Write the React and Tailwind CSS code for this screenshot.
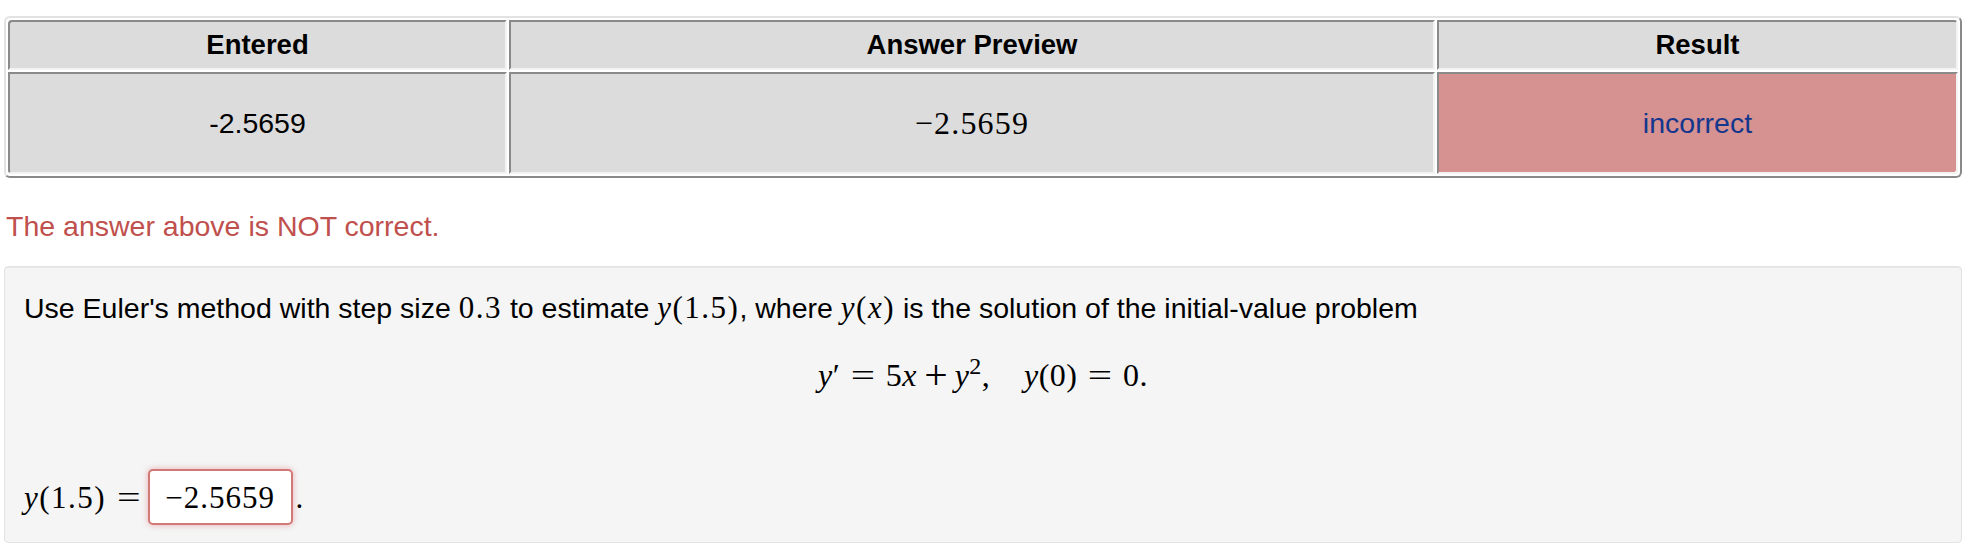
import React from "react";

const sans = "font-['Liberation_Sans',Arial,Helvetica,sans-serif]";
const serif = "font-['Liberation_Serif','Times_New_Roman',serif]";

// inset-looking table cell, the way the old results table draws them
const cell =
  "flex items-center justify-center border-2 border-t-[#8a8a8a] border-l-[#8a8a8a] border-r-[#f3f3f3] border-b-[#f3f3f3]";

// relation sign, drawn a bit wider like the TeX one
function Rel({ children }) {
  return <span className="mx-[0.42em] inline-block scale-x-[1.35]">{children}</span>;
}

function Bin({ children }) {
  return <span className="mx-[0.3em] inline-block scale-[1.3]">{children}</span>;
}

function AttemptResults() {
  return (
    <div className="grid w-[1958px] grid-cols-[499px_926px_1fr] grid-rows-[50px_102px] gap-[2px] rounded-[6px] border-2 border-t-[#e2e2e2] border-l-[#e2e2e2] border-r-[#8a8a8a] border-b-[#8a8a8a] p-[2px]">
      <div className={`${cell} rounded-tl-[4px] bg-[#dcdcdc] text-[27.5px] font-bold`}>Entered</div>
      <div className={`${cell} bg-[#dcdcdc] text-[27.5px] font-bold`}>Answer Preview</div>
      <div className={`${cell} rounded-tr-[4px] bg-[#dcdcdc] text-[27.5px] font-bold`}>Result</div>

      <div className={`${cell} rounded-bl-[4px] bg-[#dcdcdc] text-[28.5px]`}>-2.5659</div>
      <div className={`${cell} bg-[#dcdcdc]`}>
        <span className={`${serif} text-[32px] tracking-[1.2px]`}>−2.5659</span>
      </div>
      <div className={`${cell} rounded-br-[4px] bg-[#d69191] text-[28.5px] text-[#13378c]`}>incorrect</div>
    </div>
  );
}

function M({ children }) {
  return <span className={`${serif} text-[31px] tracking-[1.5px]`}>{children}</span>;
}

function Problem() {
  return (
    <div className="mt-[23px] w-[1958px] rounded-[4px] border border-[#e3e3e3] bg-[#f5f5f5] px-[19px] pt-[19px] pb-[17px] shadow-[inset_0_1px_1px_rgba(0,0,0,0.06)]">
      <div className="text-[28.5px] leading-[44px]">
        Use Euler's method with step size <M>0.3</M> to estimate{" "}
        <M>
          <i>y</i>(1.5)
        </M>
        , where{" "}
        <M>
          <i>y</i>(<i>x</i>)
        </M>{" "}
        is the solution of the initial-value problem
      </div>

      <div className={`${serif} mt-[23px] text-center text-[32px] leading-[44px] tracking-[0.5px]`}>
        <i>y</i>′<Rel>=</Rel>5<i>x</i>
        <Bin>+</Bin>
        <i>y</i>
        <sup>2</sup>,<span className="inline-block w-[1.05em]" />
        <i>y</i>(0)<Rel>=</Rel>0.
      </div>

      <div className={`${serif} mt-[72px] flex h-[56px] items-center text-[31px] leading-none`}>
        <span className="tracking-[1.5px]">
          <i>y</i>(1.5)
        </span>
        <span className="ml-[0.45em] inline-block scale-x-[1.35]">=</span>
        <span className="ml-[10px] inline-flex h-[56px] w-[145px] items-center justify-center rounded-[5px] border-2 border-[#d27876] bg-white tracking-[1px] shadow-[0_0_6px_rgba(210,90,90,0.45)]">
          −2.5659
        </span>
        <span className="ml-[3px]">.</span>
      </div>
    </div>
  );
}

export default function App() {
  return (
    <div className={`${sans} min-h-[550px] bg-white px-[4px] pt-[16px] text-black`}>
      <AttemptResults />
      <div className="mt-[31px] pl-[2px] text-[28.5px] leading-[34px] text-[#c0504d]">
        The answer above is NOT correct.
      </div>
      <Problem />
    </div>
  );
}
